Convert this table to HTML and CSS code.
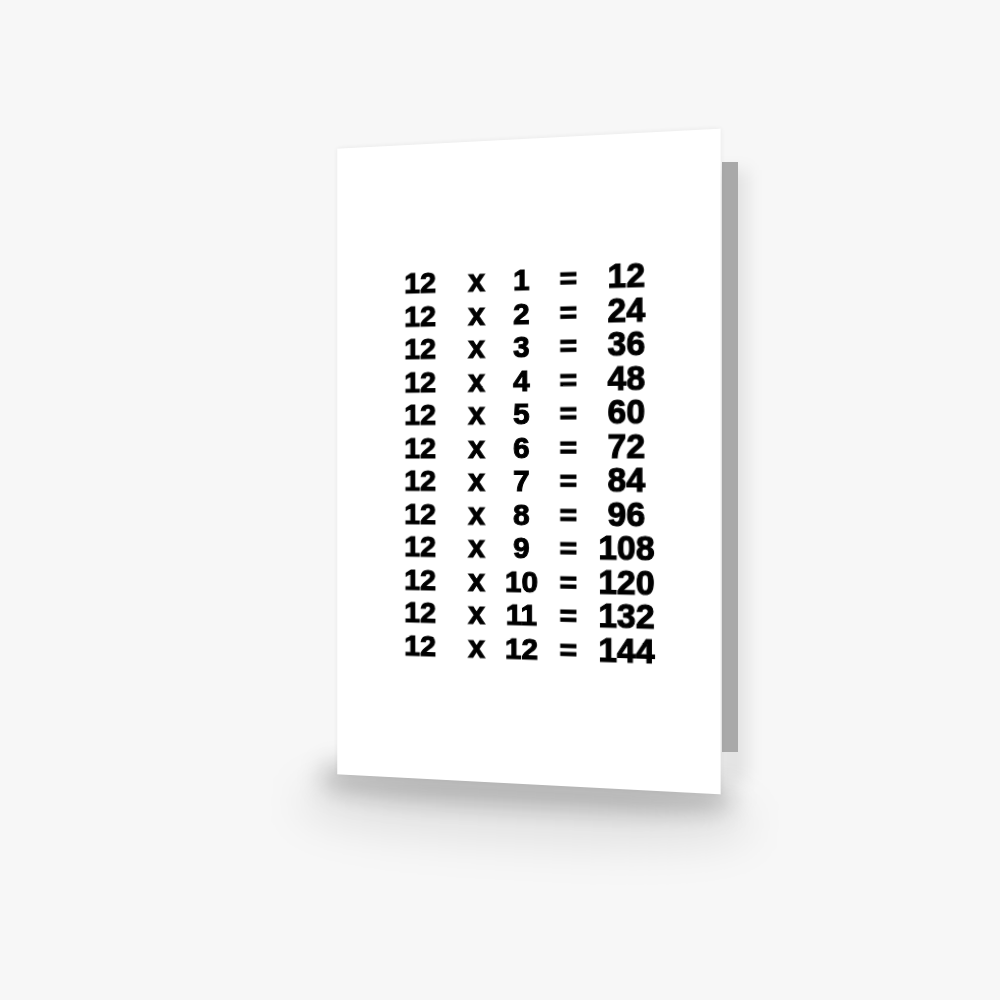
FILE: index.html
```html
<!DOCTYPE html>
<html lang="en">
<head>
<meta charset="utf-8">
<title>12 Times Table Greeting Card</title>
<link rel="stylesheet" href="styles.css">
</head>
<body>
<div class="stage">
  <div class="floor-shadow"></div>
  <div class="floor-shadow-soft"></div>
  <div class="back-shadow"></div>
  <div class="back-panel"></div>
  <div class="card">
    <div class="table">
      <div class="row"><span class="n">12</span><span class="op">x</span><span class="m">1</span><span class="eq">=</span><span class="r">12</span></div>
      <div class="row"><span class="n">12</span><span class="op">x</span><span class="m">2</span><span class="eq">=</span><span class="r">24</span></div>
      <div class="row"><span class="n">12</span><span class="op">x</span><span class="m">3</span><span class="eq">=</span><span class="r">36</span></div>
      <div class="row"><span class="n">12</span><span class="op">x</span><span class="m">4</span><span class="eq">=</span><span class="r">48</span></div>
      <div class="row"><span class="n">12</span><span class="op">x</span><span class="m">5</span><span class="eq">=</span><span class="r">60</span></div>
      <div class="row"><span class="n">12</span><span class="op">x</span><span class="m">6</span><span class="eq">=</span><span class="r">72</span></div>
      <div class="row"><span class="n">12</span><span class="op">x</span><span class="m">7</span><span class="eq">=</span><span class="r">84</span></div>
      <div class="row"><span class="n">12</span><span class="op">x</span><span class="m">8</span><span class="eq">=</span><span class="r">96</span></div>
      <div class="row"><span class="n">12</span><span class="op">x</span><span class="m">9</span><span class="eq">=</span><span class="r">108</span></div>
      <div class="row"><span class="n">12</span><span class="op">x</span><span class="m">10</span><span class="eq">=</span><span class="r">120</span></div>
      <div class="row"><span class="n">12</span><span class="op">x</span><span class="m">11</span><span class="eq">=</span><span class="r">132</span></div>
      <div class="row"><span class="n">12</span><span class="op">x</span><span class="m">12</span><span class="eq">=</span><span class="r">144</span></div>
    </div>
  </div>
</div>
</body>
</html>
```

FILE: styles.css
```css
html, body {
  margin: 0;
  padding: 0;
  background: #f7f7f7;
}

.stage {
  position: relative;
  width: 1000px;
  height: 1000px;
  overflow: hidden;
  background: #f7f7f7;
}

.floor-shadow {
  position: absolute;
  left: 322px;
  top: 770px;
  width: 410px;
  height: 36px;
  background: rgba(0, 0, 0, 0.24);
  filter: blur(12px);
  transform: rotate(3deg);
  border-radius: 30%;
}

.floor-shadow-soft {
  position: absolute;
  left: 300px;
  top: 782px;
  width: 450px;
  height: 62px;
  background: rgba(0, 0, 0, 0.08);
  filter: blur(20px);
  transform: rotate(3deg);
  border-radius: 40%;
}

.back-shadow {
  position: absolute;
  left: 716px;
  top: 170px;
  width: 32px;
  height: 610px;
  background: rgba(0, 0, 0, 0.08);
  filter: blur(8px);
}

.back-panel {
  position: absolute;
  left: 722px;
  top: 162px;
  width: 16px;
  height: 590px;
  background: #a9a9a9;
  filter: blur(0.6px);
}

.card {
  position: absolute;
  left: 328.6px;
  top: 138.5px;
  width: 388px;
  height: 645px;
  background: #ffffff;
  transform: perspective(1000px) rotateY(-9.2deg);
  transform-origin: 50% 50%;
  box-shadow: 0 0 5px rgba(0, 0, 0, 0.07);
}

.table {
  padding-top: 127px;
  padding-left: 68px;
  font-family: "Liberation Sans", Arial, sans-serif;
  font-weight: 700;
  color: #000;
  -webkit-text-stroke: 1.1px #000;
}

.row {
  display: flex;
  align-items: baseline;
  height: 33.5px;
  font-size: 30px;
}

.row span {
  display: block;
  line-height: 26px;
  text-align: center;
  white-space: nowrap;
}

.n {
  width: 40px;
}

.op {
  width: 24px;
  margin-left: 26.5px;
  font-size: 31px;
}

.m {
  width: 40px;
  margin-left: 13.9px;
}

.eq {
  width: 24px;
  margin-left: 15.2px;
}

.r {
  width: 64px;
  margin-left: 13.4px;
  font-size: 33px;
}
```
